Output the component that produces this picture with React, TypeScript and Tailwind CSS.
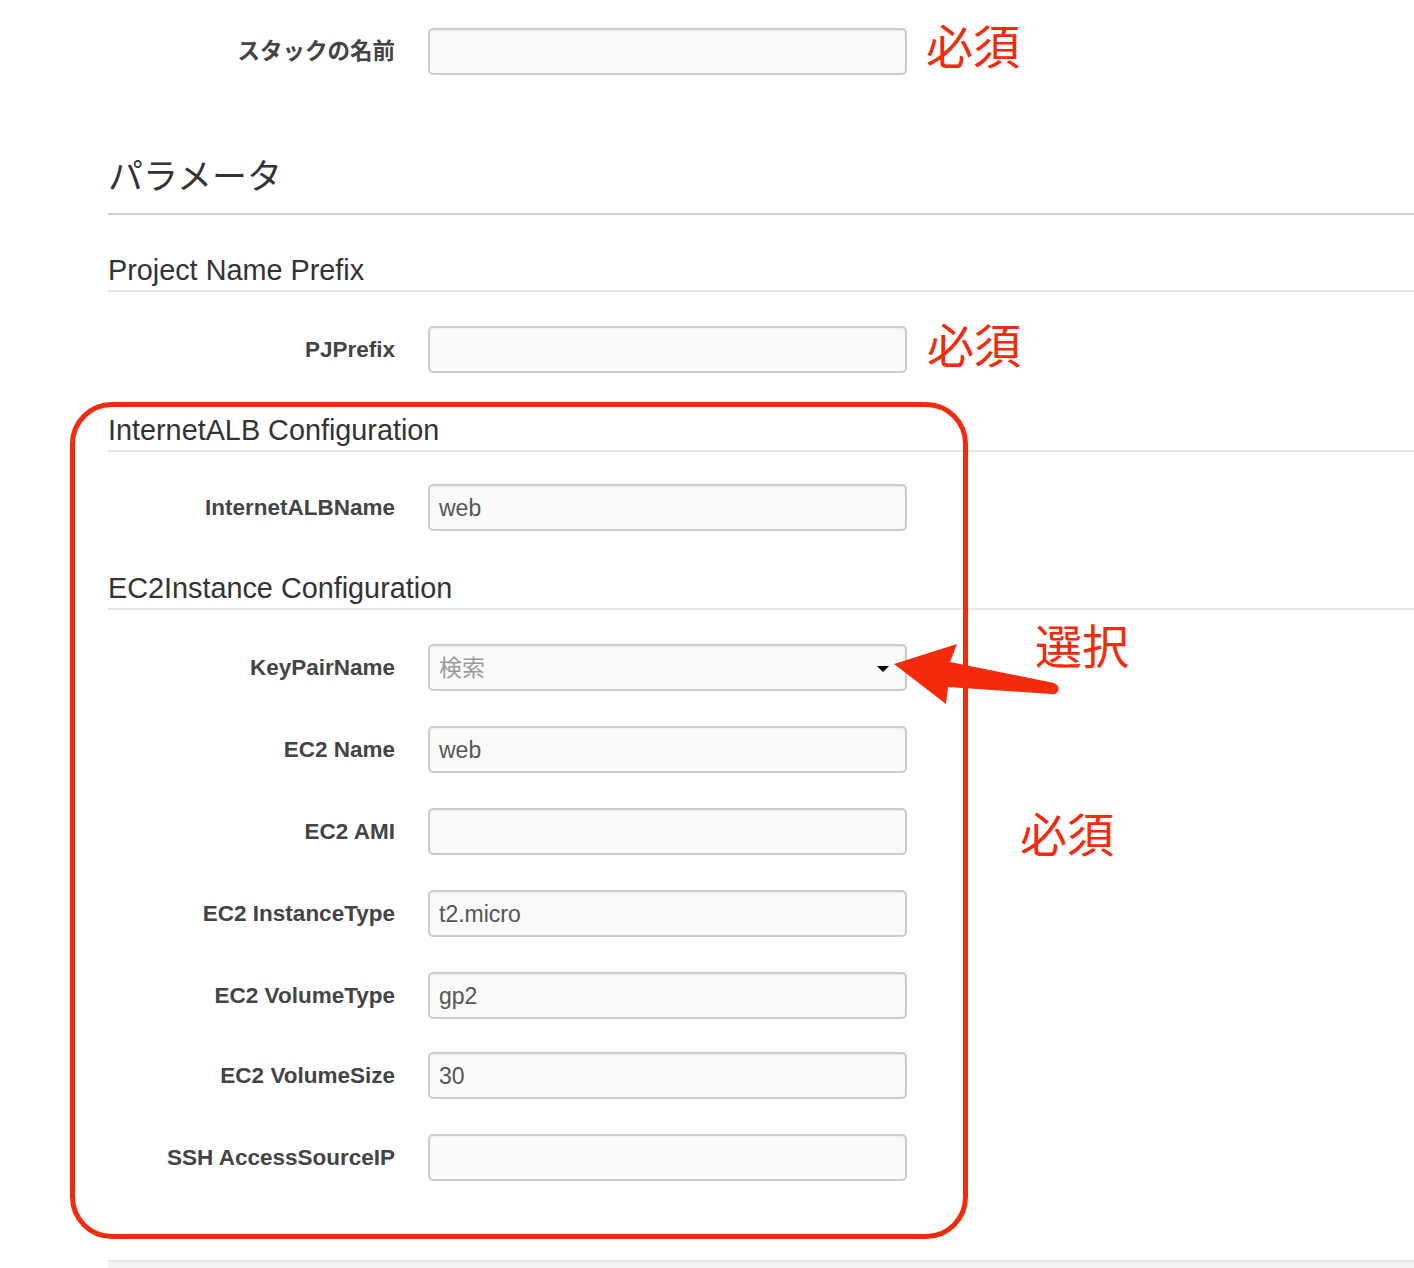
import React from "react";

const font = { fontFamily: '"Liberation Sans", "Noto Sans CJK JP", Arial, sans-serif' };

function Row({ label, value, placeholder, select, note, noteClass, mt }: { label: string; value?: string; placeholder?: string; select?: boolean; note?: string; noteClass?: string; mt: string }) {
  return (
    <div className={`flex h-[47px] items-center ${mt}`}>
      <div className="w-[287px] shrink-0 text-right text-[22.5px] font-bold leading-[26px] text-[#444]">{label}</div>
      <div className="relative ml-[33px] flex h-[47px] w-[479px] shrink-0 items-center rounded-[5px] border-2 border-[#cbcbcb] bg-[#fafafa] pl-[9px] text-[23px] text-[#555] shadow-[inset_0_1px_2px_rgba(0,0,0,0.06)]">
        {value ? <span className="relative top-[1px]">{value}</span> : null}
        {placeholder ? <span className="relative top-[1px] text-[#999]">{placeholder}</span> : null}
        {select ? (
          <span className="absolute right-[16px] top-[20px] h-0 w-0 border-x-[6px] border-t-[6px] border-x-transparent border-t-black" />
        ) : null}
      </div>
      {note ? <div className={`relative text-[47px] leading-[50px] text-[#f52a0c] ${noteClass ?? "ml-[19px]"}`}>{note}</div> : null}
    </div>
  );
}

function Heading({ text, mt }: { text: string; mt: string }) {
  return (
    <div className={`${mt} border-b-2 border-[#e4e4e4] pb-[3px] text-[28.8px] leading-[34px] text-[#333]`}>{text}</div>
  );
}

export default function App() {
  return (
    <div className="relative h-[1268px] w-[1414px] overflow-hidden bg-white" style={font}>
      <div className="pl-[108px] pt-[28px]">
        <div className="-ml-[108px]">
          <div className="pl-[108px]">
            <Row label="スタックの名前" mt="mt-0" note="必須" noteClass="ml-[19px] -top-[4px]" />
          </div>
        </div>
        <div className="mt-[82px] border-b-2 border-[#cfcfcf] pb-[16px] text-[35px] leading-[40px] text-[#333]">パラメータ</div>
        <Heading text="Project Name Prefix" mt="mt-[38px]" />
        <div className="-ml-[108px] pl-[108px]">
          <Row label="PJPrefix" mt="mt-[34px]" note="必須" noteClass="ml-[20px] -top-[3px]" />
        </div>
        <Heading text="InternetALB Configuration" mt="mt-[40px]" />
        <Row label="InternetALBName" value="web" mt="mt-[32px]" />
        <Heading text="EC2Instance Configuration" mt="mt-[40px]" />
        <Row label="KeyPairName" placeholder="検索" select mt="mt-[34px]" />
        <Row label="EC2 Name" value="web" mt="mt-[35px]" />
        <Row label="EC2 AMI" mt="mt-[35px]" note="必須" noteClass="ml-[113px] top-[4px]" />
        <Row label="EC2 InstanceType" value="t2.micro" mt="mt-[35px]" />
        <Row label="EC2 VolumeType" value="gp2" mt="mt-[35px]" />
        <Row label="EC2 VolumeSize" value="30" mt="mt-[33px]" />
        <Row label="SSH AccessSourceIP" mt="mt-[35px]" />
        <div className="mt-[79px] h-[20px] border-t-2 border-[#e3e3e3] bg-[#f5f5f5]" />
      </div>

      {/* red annotation box */}
      <div className="absolute left-[70px] top-[402px] h-[837px] w-[898px] rounded-[42px] border-[5px] border-[#f52a0c]" />

      {/* 選択 annotation */}
      <div className="absolute left-[1035px] top-[622px] text-[47px] leading-[52px] text-[#f52a0c]">選択</div>

      {/* arrow */}
      <svg className="absolute left-0 top-0" width="1414" height="1268" viewBox="0 0 1414 1268">
        <path
          d="M894 664 L957 644 L950 662 L1054 683 Q1060 686 1058 691 Q1056 695 1051 694 L948 687 L946 704 Z"
          fill="#f52a0c"
        />
      </svg>
    </div>
  );
}
